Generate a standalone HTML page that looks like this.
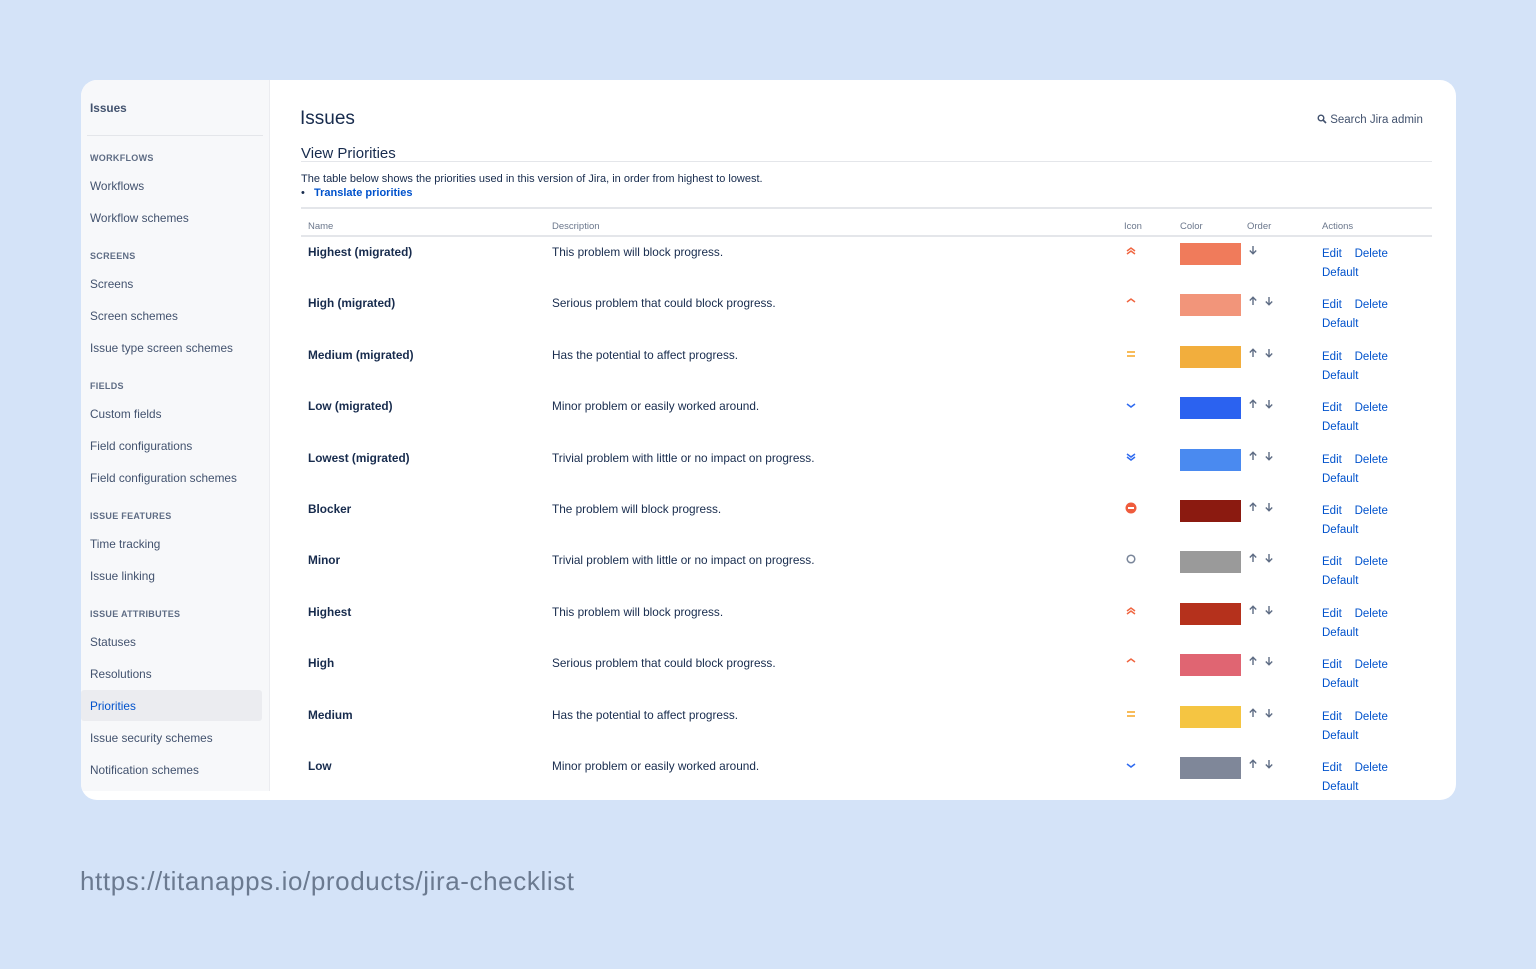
<!DOCTYPE html>
<html><head><meta charset="utf-8"><style>
*{margin:0;padding:0;box-sizing:border-box}
body{width:1536px;height:969px;background:#d4e3f8;font-family:"Liberation Sans",sans-serif;position:relative;overflow:hidden;color:#172b4d}
.card{position:absolute;left:81px;top:80px;width:1375px;height:720px;background:#fff;border-radius:16px;overflow:hidden}
.side{position:absolute;left:0;top:0;width:189px;height:711px;background:#f7f8fa;border-right:1px solid #ebecf0}
.a{position:absolute;white-space:nowrap;margin-top:2px}
.side .a{margin-top:0}
.row .a{margin-top:1px}
.si{font-size:11.8px;color:#42526e}
.sh{font-size:9px;font-weight:bold;color:#5e6c84;letter-spacing:.3px}
.n{font-size:11.8px;font-weight:bold;color:#172b4d}
.d{font-size:11.8px;color:#172b4d}
.l{font-size:11.5px;color:#0052cc}
.sw{position:absolute;width:61px;height:22px;margin-top:2px}
.ar{font-size:11px;color:#5e6c84}
.th{font-size:9.5px;color:#6b778c}
</style></head><body>
<svg width="0" height="0" style="position:absolute"><defs>
<symbol id="up" viewBox="0 0 10 10"><path d="M5 9V1.5M1.8 4.5L5 1.3l3.2 3.2" stroke="#5e6c84" stroke-width="1.4" fill="none"/></symbol>
<symbol id="dn" viewBox="0 0 10 10"><path d="M5 1v7.5M1.8 5.5L5 8.7l3.2-3.2" stroke="#5e6c84" stroke-width="1.4" fill="none"/></symbol>
</defs></svg>
<div class="card">
<div class="side">
<div class="a si" style="left:9px;top:21px;font-weight:bold;color:#42526e">Issues</div>
<div style="position:absolute;left:6px;top:55px;width:176px;height:1px;background:#e4e6ea"></div>
<div class="a sh" style="left:9px;top:73px">WORKFLOWS</div>
<div class="a si" style="left:9px;top:99px">Workflows</div>
<div class="a si" style="left:9px;top:131px">Workflow schemes</div>
<div class="a sh" style="left:9px;top:171px">SCREENS</div>
<div class="a si" style="left:9px;top:197px">Screens</div>
<div class="a si" style="left:9px;top:229px">Screen schemes</div>
<div class="a si" style="left:9px;top:261px">Issue type screen schemes</div>
<div class="a sh" style="left:9px;top:301px">FIELDS</div>
<div class="a si" style="left:9px;top:327px">Custom fields</div>
<div class="a si" style="left:9px;top:359px">Field configurations</div>
<div class="a si" style="left:9px;top:391px">Field configuration schemes</div>
<div class="a sh" style="left:9px;top:431px">ISSUE FEATURES</div>
<div class="a si" style="left:9px;top:457px">Time tracking</div>
<div class="a si" style="left:9px;top:489px">Issue linking</div>
<div class="a sh" style="left:9px;top:529px">ISSUE ATTRIBUTES</div>
<div class="a si" style="left:9px;top:555px">Statuses</div>
<div class="a si" style="left:9px;top:587px">Resolutions</div>
<div style="position:absolute;left:0;top:610px;width:181px;height:31px;background:#ebecf0;border-radius:3px"></div>
<div class="a si" style="left:9px;top:619px;color:#0052cc">Priorities</div>
<div class="a si" style="left:9px;top:651px">Issue security schemes</div>
<div class="a si" style="left:9px;top:683px">Notification schemes</div>
</div>
</div>
<div class="a" style="left:300px;top:106px;font-size:19px;color:#172b4d">Issues</div>
<div class="a" style="left:1317px;top:112px;font-size:11.5px;color:#42526e"><svg width="10" height="10" viewBox="0 0 10 10" style="vertical-align:-1px"><circle cx="4" cy="4" r="2.8" fill="none" stroke="#42526e" stroke-width="1.4"/><path d="M6 6L9 9" stroke="#42526e" stroke-width="1.6"/></svg> Search Jira admin</div>
<div class="a" style="left:301px;top:143px;font-size:15px;color:#172b4d">View Priorities</div>
<div style="position:absolute;left:301px;top:161px;width:1131px;height:1px;background:#e4e6ea"></div>
<div class="a" style="left:301px;top:171px;font-size:11px">The table below shows the priorities used in this version of Jira, in order from highest to lowest.</div>
<div class="a" style="left:301px;top:185px;font-size:11px">•&nbsp;&nbsp;&nbsp;<b style="color:#0052cc">Translate priorities</b></div>
<div style="position:absolute;left:301px;top:207px;width:1131px;height:2px;background:#e4e6ea"></div>
<div class="a th" style="left:308px;top:219px">Name</div>
<div class="a th" style="left:552px;top:219px">Description</div>
<div class="a th" style="left:1124px;top:219px">Icon</div>
<div class="a th" style="left:1180px;top:219px">Color</div>
<div class="a th" style="left:1247px;top:219px">Order</div>
<div class="a th" style="left:1322px;top:219px">Actions</div>
<div style="position:absolute;left:301px;top:235px;width:1131px;height:2px;background:#e4e6ea"></div>

<div style="position:absolute;left:0;top:0;width:1536px;height:791px;overflow:hidden">
<div class="row" style="position:absolute;left:0;top:244px">
<div class="a n" style="left:308px">Highest (migrated)</div><div class="a d" style="left:552px">This problem will block progress.</div>
<svg class="a" style="left:1125px;top:0" width="12" height="12"><path d="M2 6l4-3 4 3M2 9l4-3 4 3" stroke="#f06540" stroke-width="1.5" fill="none"/></svg>
<div class="sw" style="left:1180px;top:-3px;background:#f07b5b"></div>
<svg class="a" style="left:1248px;top:0" width="10" height="10"><use href="#dn"/></svg>
<div class="a l" style="left:1322px;top:3px">Edit&nbsp;&nbsp;&nbsp;&nbsp;Delete</div><div class="a l" style="left:1322px;top:22px">Default</div></div>

<div class="row" style="position:absolute;left:0;top:295.4px">
<div class="a n" style="left:308px">High (migrated)</div><div class="a d" style="left:552px">Serious problem that could block progress.</div>
<svg class="a" style="left:1125px;top:0" width="12" height="12"><path d="M2 6l4-3 4 3" stroke="#f06540" stroke-width="1.5" fill="none"/></svg>
<div class="sw" style="left:1180px;top:-3px;background:#f2957a"></div>
<svg class="a" style="left:1248px;top:0" width="10" height="10"><use href="#up"/></svg><svg class="a" style="left:1264px;top:0" width="10" height="10"><use href="#dn"/></svg>
<div class="a l" style="left:1322px;top:3px">Edit&nbsp;&nbsp;&nbsp;&nbsp;Delete</div><div class="a l" style="left:1322px;top:22px">Default</div></div>

<div class="row" style="position:absolute;left:0;top:346.8px">
<div class="a n" style="left:308px">Medium (migrated)</div><div class="a d" style="left:552px">Has the potential to affect progress.</div>
<svg class="a" style="left:1125px;top:0" width="12" height="12"><path d="M2 4h8M2 8h8" stroke="#f5a623" stroke-width="1.5" fill="none"/></svg>
<div class="sw" style="left:1180px;top:-3px;background:#f2ae3d"></div>
<svg class="a" style="left:1248px;top:0" width="10" height="10"><use href="#up"/></svg><svg class="a" style="left:1264px;top:0" width="10" height="10"><use href="#dn"/></svg>
<div class="a l" style="left:1322px;top:3px">Edit&nbsp;&nbsp;&nbsp;&nbsp;Delete</div><div class="a l" style="left:1322px;top:22px">Default</div></div>

<div class="row" style="position:absolute;left:0;top:398.2px">
<div class="a n" style="left:308px">Low (migrated)</div><div class="a d" style="left:552px">Minor problem or easily worked around.</div>
<svg class="a" style="left:1125px;top:0" width="12" height="12"><path d="M2 5l4 3 4-3" stroke="#2f6bf0" stroke-width="1.5" fill="none"/></svg>
<div class="sw" style="left:1180px;top:-3px;background:#2b62f0"></div>
<svg class="a" style="left:1248px;top:0" width="10" height="10"><use href="#up"/></svg><svg class="a" style="left:1264px;top:0" width="10" height="10"><use href="#dn"/></svg>
<div class="a l" style="left:1322px;top:3px">Edit&nbsp;&nbsp;&nbsp;&nbsp;Delete</div><div class="a l" style="left:1322px;top:22px">Default</div></div>

<div class="row" style="position:absolute;left:0;top:449.6px">
<div class="a n" style="left:308px">Lowest (migrated)</div><div class="a d" style="left:552px">Trivial problem with little or no impact on progress.</div>
<svg class="a" style="left:1125px;top:0" width="12" height="12"><path d="M2 3l4 3 4-3M2 6l4 3 4-3" stroke="#2f6bf0" stroke-width="1.5" fill="none"/></svg>
<div class="sw" style="left:1180px;top:-3px;background:#4a8af0"></div>
<svg class="a" style="left:1248px;top:0" width="10" height="10"><use href="#up"/></svg><svg class="a" style="left:1264px;top:0" width="10" height="10"><use href="#dn"/></svg>
<div class="a l" style="left:1322px;top:3px">Edit&nbsp;&nbsp;&nbsp;&nbsp;Delete</div><div class="a l" style="left:1322px;top:22px">Default</div></div>

<div class="row" style="position:absolute;left:0;top:501px">
<div class="a n" style="left:308px">Blocker</div><div class="a d" style="left:552px">The problem will block progress.</div>
<svg class="a" style="left:1125px;top:0" width="12" height="12"><circle cx="6" cy="6" r="5.5" fill="#ef5c3d"/><path d="M3 6h6" stroke="#fff" stroke-width="2"/></svg>
<div class="sw" style="left:1180px;top:-3px;background:#8b1a10"></div>
<svg class="a" style="left:1248px;top:0" width="10" height="10"><use href="#up"/></svg><svg class="a" style="left:1264px;top:0" width="10" height="10"><use href="#dn"/></svg>
<div class="a l" style="left:1322px;top:3px">Edit&nbsp;&nbsp;&nbsp;&nbsp;Delete</div><div class="a l" style="left:1322px;top:22px">Default</div></div>

<div class="row" style="position:absolute;left:0;top:552.4px">
<div class="a n" style="left:308px">Minor</div><div class="a d" style="left:552px">Trivial problem with little or no impact on progress.</div>
<svg class="a" style="left:1125px;top:0" width="12" height="12"><circle cx="6" cy="6" r="3.8" fill="none" stroke="#7a869a" stroke-width="1.5"/></svg>
<div class="sw" style="left:1180px;top:-3px;background:#9a9a9a"></div>
<svg class="a" style="left:1248px;top:0" width="10" height="10"><use href="#up"/></svg><svg class="a" style="left:1264px;top:0" width="10" height="10"><use href="#dn"/></svg>
<div class="a l" style="left:1322px;top:3px">Edit&nbsp;&nbsp;&nbsp;&nbsp;Delete</div><div class="a l" style="left:1322px;top:22px">Default</div></div>

<div class="row" style="position:absolute;left:0;top:603.8px">
<div class="a n" style="left:308px">Highest</div><div class="a d" style="left:552px">This problem will block progress.</div>
<svg class="a" style="left:1125px;top:0" width="12" height="12"><path d="M2 6l4-3 4 3M2 9l4-3 4 3" stroke="#f06540" stroke-width="1.5" fill="none"/></svg>
<div class="sw" style="left:1180px;top:-3px;background:#b5311c"></div>
<svg class="a" style="left:1248px;top:0" width="10" height="10"><use href="#up"/></svg><svg class="a" style="left:1264px;top:0" width="10" height="10"><use href="#dn"/></svg>
<div class="a l" style="left:1322px;top:3px">Edit&nbsp;&nbsp;&nbsp;&nbsp;Delete</div><div class="a l" style="left:1322px;top:22px">Default</div></div>

<div class="row" style="position:absolute;left:0;top:655.2px">
<div class="a n" style="left:308px">High</div><div class="a d" style="left:552px">Serious problem that could block progress.</div>
<svg class="a" style="left:1125px;top:0" width="12" height="12"><path d="M2 6l4-3 4 3" stroke="#f06540" stroke-width="1.5" fill="none"/></svg>
<div class="sw" style="left:1180px;top:-3px;background:#e06572"></div>
<svg class="a" style="left:1248px;top:0" width="10" height="10"><use href="#up"/></svg><svg class="a" style="left:1264px;top:0" width="10" height="10"><use href="#dn"/></svg>
<div class="a l" style="left:1322px;top:3px">Edit&nbsp;&nbsp;&nbsp;&nbsp;Delete</div><div class="a l" style="left:1322px;top:22px">Default</div></div>

<div class="row" style="position:absolute;left:0;top:706.6px">
<div class="a n" style="left:308px">Medium</div><div class="a d" style="left:552px">Has the potential to affect progress.</div>
<svg class="a" style="left:1125px;top:0" width="12" height="12"><path d="M2 4h8M2 8h8" stroke="#f5a623" stroke-width="1.5" fill="none"/></svg>
<div class="sw" style="left:1180px;top:-3px;background:#f5c542"></div>
<svg class="a" style="left:1248px;top:0" width="10" height="10"><use href="#up"/></svg><svg class="a" style="left:1264px;top:0" width="10" height="10"><use href="#dn"/></svg>
<div class="a l" style="left:1322px;top:3px">Edit&nbsp;&nbsp;&nbsp;&nbsp;Delete</div><div class="a l" style="left:1322px;top:22px">Default</div></div>

<div class="row" style="position:absolute;left:0;top:758px">
<div class="a n" style="left:308px">Low</div><div class="a d" style="left:552px">Minor problem or easily worked around.</div>
<svg class="a" style="left:1125px;top:0" width="12" height="12"><path d="M2 5l4 3 4-3" stroke="#2f6bf0" stroke-width="1.5" fill="none"/></svg>
<div class="sw" style="left:1180px;top:-3px;background:#7f8799"></div>
<svg class="a" style="left:1248px;top:0" width="10" height="10"><use href="#up"/></svg><svg class="a" style="left:1264px;top:0" width="10" height="10"><use href="#dn"/></svg>
<div class="a l" style="left:1322px;top:3px">Edit&nbsp;&nbsp;&nbsp;&nbsp;Delete</div><div class="a l" style="left:1322px;top:22px">Default</div></div>
</div>

<div class="a" style="left:80px;top:864px;font-size:26px;color:#6b7a90;letter-spacing:0.6px">https://titanapps.io/products/jira-checklist</div>
</body></html>
